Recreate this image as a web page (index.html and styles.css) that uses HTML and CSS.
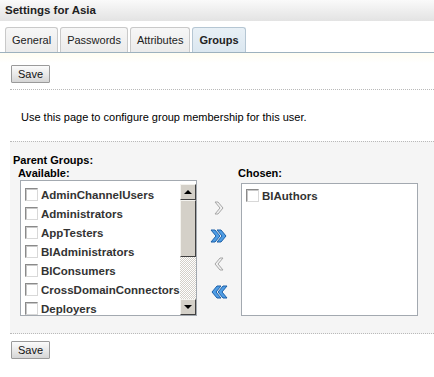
FILE: index.html
```html
<!DOCTYPE html>
<html lang="en">
<head>
    <meta charset="UTF-8">
    <title>Settings for Asia</title>
    <link rel="stylesheet" href="styles.css">
</head>
<body>
    <div class="title-bar">Settings for Asia</div>

    <div class="tabs">
        <div class="tab">General</div>
        <div class="tab">Passwords</div>
        <div class="tab">Attributes</div>
        <div class="tab active">Groups</div>
    </div>
    <div class="tab-glow"></div>

    <div class="toolbar">
        <button class="btn">Save</button>
    </div>

    <div class="intro">Use this page to configure group membership for this user.</div>

    <div class="groups">
        <div class="heading">Parent Groups:</div>
        <div class="shuttle">
            <div class="available">
                <div class="label">Available:</div>
                <div class="listbox">
                    <div class="items">
                        <div class="item"><span class="check"></span>AdminChannelUsers</div>
                        <div class="item"><span class="check"></span>Administrators</div>
                        <div class="item"><span class="check"></span>AppTesters</div>
                        <div class="item"><span class="check"></span>BIAdministrators</div>
                        <div class="item"><span class="check"></span>BIConsumers</div>
                        <div class="item"><span class="check"></span>CrossDomainConnectors</div>
                        <div class="item"><span class="check"></span>Deployers</div>
                    </div>
                    <div class="scrollbar">
                        <div class="sb-btn"><span class="arrow-up"></span></div>
                        <div class="sb-thumb"></div>
                        <div class="sb-track"></div>
                        <div class="sb-btn"><span class="arrow-down"></span></div>
                    </div>
                </div>
            </div>

            <div class="moves">
                <svg width="12" height="14" viewBox="0 0 12 14"><polygon points="2,1 5,1 10,7 5,13 2,13 7,7" fill="#f1f1f1" stroke="#a6a6a6" stroke-width="1" stroke-linejoin="round"/></svg>
                <svg width="18" height="14" viewBox="0 0 18 14"><polygon points="1,1 5,1 10,7 5,13 1,13 6,7" fill="#4f9ee6" stroke="#1d5fa6" stroke-linejoin="round"/><polygon points="7,1 11,1 16,7 11,13 7,13 12,7" fill="#4f9ee6" stroke="#1d5fa6" stroke-linejoin="round"/></svg>
                <svg width="12" height="14" viewBox="0 0 12 14"><polygon points="10,1 7,1 2,7 7,13 10,13 5,7" fill="#f1f1f1" stroke="#a6a6a6" stroke-width="1" stroke-linejoin="round"/></svg>
                <svg width="18" height="14" viewBox="0 0 18 14"><polygon points="17,1 13,1 8,7 13,13 17,13 12,7" fill="#4f9ee6" stroke="#1d5fa6" stroke-linejoin="round"/><polygon points="11,1 7,1 2,7 7,13 11,13 6,7" fill="#4f9ee6" stroke="#1d5fa6" stroke-linejoin="round"/></svg>
            </div>

            <div class="chosen">
                <div class="label">Chosen:</div>
                <div class="chosen-box">
                    <div class="item"><span class="check"></span>BIAuthors</div>
                </div>
            </div>
        </div>
    </div>

    <div class="toolbar bottom">
        <button class="btn">Save</button>
    </div>
</body>
</html>
```

FILE: styles.css
```css
* {
    box-sizing: border-box;
}

body {
    margin: 0;
    background: #ffffff;
    color: #000000;
    font-family: Tahoma, "Liberation Sans", Arial, sans-serif;
    font-size: 11px;
}

.title-bar {
    height: 21px;
    line-height: 21px;
    padding-left: 5px;
    font-size: 11.5px;
    font-weight: bold;
    color: #222;
    background: linear-gradient(#fafafa 0%, #ececec 60%, #e3e3e3 100%);
}

.tabs {
    display: flex;
    gap: 2px;
    padding: 6px 0 0 5px;
    border-bottom: 1px solid #9db1be;
}

.tab {
    height: 25px;
    line-height: 24px;
    padding: 0 6px;
    border: 1px solid #c9c9c9;
    border-bottom: none;
    border-radius: 3px 3px 0 0;
    background: linear-gradient(#f7f7f7, #ebebeb);
    color: #222;
}

.tab.active {
    font-weight: bold;
    border-color: #b5c6d3;
    background: linear-gradient(#e8f0f6, #dbe7f0);
}

.tab-glow {
    height: 10px;
    background: linear-gradient(#fffdf2, #ffffff);
}

.toolbar {
    padding: 2px 0 0 11px;
    height: 26px;
}

.toolbar.bottom {
    height: auto;
    padding-top: 7px;
}

.btn {
    height: 18px;
    width: 39px;
    padding: 0;
    font-family: inherit;
    font-size: 11px;
    color: #111;
    border: 1px solid #9a9a9a;
    border-radius: 1px;
    background: linear-gradient(#fbfbfb, #e6e6e6 60%, #d6d6d6);
}

.intro {
    margin-left: 10px;
    padding: 21px 0 18px 11px;
    border-top: 1px dotted #b9b9b9;
}

.groups {
    margin-left: 10px;
    padding: 11px 0 17px 3px;
    background: #f5f5f5;
    border-top: 1px dotted #b9b9b9;
    border-bottom: 1px dotted #b9b9b9;
}

.heading,
.label {
    font-weight: bold;
    line-height: 14px;
}

.shuttle {
    display: flex;
}

.available {
    padding-left: 5px;
}

.available .label {
    line-height: 13px;
}

.listbox {
    display: flex;
    width: 177px;
    height: 136px;
    margin-left: 2px;
    border: 1px solid #a3a9b0;
    background: #ffffff;
}

.items {
    flex: 1;
    padding-top: 4px;
    overflow: hidden;
}

.item {
    display: flex;
    align-items: center;
    height: 19px;
    padding-left: 4px;
    font-size: 11.5px;
    font-weight: bold;
    color: #333;
    white-space: nowrap;
}

.check {
    width: 13px;
    height: 13px;
    margin-right: 3px;
    background: #ffffff;
    border: 1px solid #8a8a8a;
    border-right-color: #d8d8d8;
    border-bottom-color: #d8d8d8;
    box-shadow: inset 1px 1px 0 #c8c8c8;
}

.scrollbar {
    display: flex;
    flex-direction: column;
    width: 16px;
    padding-top: 3px;
}

.sb-btn {
    display: flex;
    align-items: center;
    justify-content: center;
    height: 16px;
    background: #d4d0c8;
    border: 1px solid;
    border-color: #f4f3ef #404040 #404040 #f4f3ef;
}

.arrow-up {
    border: 4px solid transparent;
    border-top: none;
    border-bottom: 4px solid #000;
}

.arrow-down {
    border: 4px solid transparent;
    border-bottom: none;
    border-top: 4px solid #000;
}

.sb-thumb {
    height: 57px;
    background: #d4d0c8;
    border: 1px solid;
    border-color: #f4f3ef #404040 #404040 #f4f3ef;
}

.sb-track {
    flex: 1;
    background: repeating-conic-gradient(#ffffff 0 25%, #d4d0c8 0 50%) 0 0 / 2px 2px;
}

.moves {
    width: 44px;
    display: flex;
    flex-direction: column;
    align-items: center;
    gap: 14px;
    padding-top: 34px;
}

.chosen .label {
    margin-left: -3px;
    line-height: 13px;
}

.chosen-box {
    width: 177px;
    height: 133px;
    margin-top: 3px;
    padding-top: 2px;
    border: 1px solid #a3a9b0;
    background: #ffffff;
}
```
